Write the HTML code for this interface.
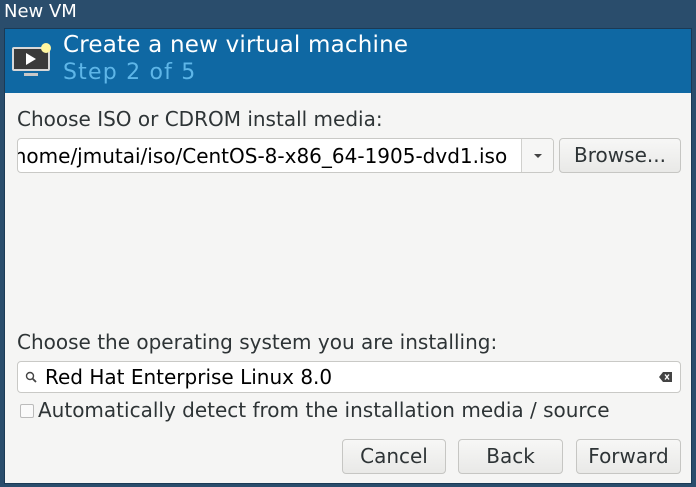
<!DOCTYPE html>
<html><head><style>
*{margin:0;padding:0;box-sizing:border-box}
body{width:696px;height:487px;background:#2a4d6c;font-family:"DejaVu Sans","Liberation Sans",sans-serif;position:relative;overflow:hidden;color:#2e3436}
.abs{position:absolute;white-space:nowrap}
.win{left:4px;top:28px;width:688px;height:456px;background:#f5f5f4;border:1px solid #1b3a55}
.hdr{left:5px;top:29px;width:686px;height:64px;background:#0f68a3}
.btn{position:absolute;background:linear-gradient(#f7f7f6,#e9e9e7);border:1px solid #c6c6c3;border-radius:4px;font-size:20px;text-align:center;line-height:33px;color:#2e3436}
.entry{position:absolute;background:#fff;border:1px solid #c9c9c6;border-radius:4px}
</style></head><body>
<div class="abs" style="left:4px;top:1px;font-size:18px;color:#fff;">New VM</div>
<div class="abs win"></div>
<div class="abs hdr"></div>
<svg class="abs" style="left:10px;top:40px" width="44" height="40" viewBox="0 0 44 40">
<rect x="2" y="7" width="38" height="24" rx="2" fill="#d8d8d8"/>
<rect x="4" y="9" width="34" height="20" fill="#3a3a3a"/>
<path d="M16 13 L26 19 L16 25 Z" fill="#fff"/>
<rect x="14" y="33" width="14" height="3" fill="#c8c8c8"/>
<circle cx="36" cy="8" r="5" fill="#fff6a0"/>
</svg>
<div class="abs" style="left:63px;top:32px;font-size:23px;color:#fff;letter-spacing:0.2px">Create a new virtual machine</div>
<div class="abs" style="left:63px;top:60px;font-size:22px;color:#5eb6e8;letter-spacing:1.2px">Step 2 of 5</div>
<div class="abs" style="left:17px;top:107px;font-size:20px">Choose ISO or CDROM install media:</div>
<div class="entry" style="left:17px;top:138px;width:537px;height:35px;overflow:hidden">
<div class="abs" style="left:-11px;top:5px;font-size:20px;color:#000">/home/jmutai/iso/CentOS-8-x86_64-1905-dvd1.iso</div>
<div class="abs" style="left:503px;top:0;width:33px;height:33px;border-left:1px solid #d0d0cd;background:#f6f6f5"></div>
<div class="abs" style="left:516px;top:15px;width:0;height:0;border-left:4px solid transparent;border-right:4px solid transparent;border-top:4px solid #444"></div>
</div>
<div class="btn" style="left:559px;top:138px;width:122px;height:35px">Browse...</div>
<div class="abs" style="left:17px;top:330px;font-size:20px">Choose the operating system you are installing:</div>
<div class="entry" style="left:17px;top:361px;width:664px;height:32px">
<svg class="abs" style="left:7px;top:9px" width="12" height="12"><circle cx="5" cy="5" r="3.5" stroke="#444" stroke-width="1.4" fill="none"/><path d="M7.5 7.5 L11 11" stroke="#444" stroke-width="1.8"/></svg>
<div class="abs" style="left:27px;top:3px;font-size:20px;color:#000">Red Hat Enterprise Linux 8.0</div>
<svg class="abs" style="left:641px;top:9px" width="14" height="12"><path d="M0 6 L4 1 H13 V11 H4 Z" fill="#444"/><path d="M6 3.5 L10 8.5 M10 3.5 L6 8.5" stroke="#fff" stroke-width="1.4"/></svg>
</div>
<div class="abs" style="left:20px;top:404px;width:14px;height:14px;border:1px solid #bbb;border-radius:2px;background:#fafafa"></div>
<div class="abs" style="left:38px;top:398px;font-size:20px">Automatically detect from the installation media / source</div>
<div class="btn" style="left:342px;top:439px;width:104px;height:35px">Cancel</div>
<div class="btn" style="left:458px;top:439px;width:105px;height:35px">Back</div>
<div class="btn" style="left:576px;top:439px;width:105px;height:35px">Forward</div>
</body></html>
